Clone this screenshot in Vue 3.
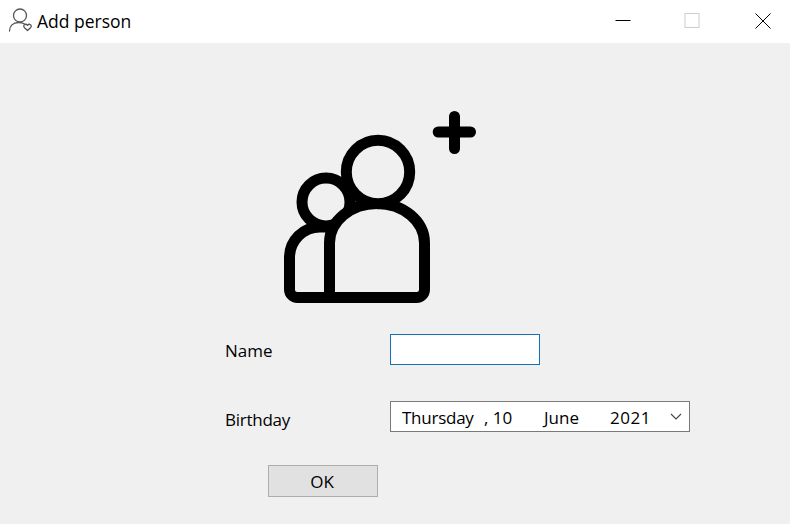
<template>
  <div class="window">
    <div class="titlebar">
      <svg class="app-icon" width="29" height="29" viewBox="0 0 29 29" fill="none" stroke="#555" stroke-width="1.300">
        <circle cx="16" cy="8.500" r="6.500" />
        <path d="M5.500 24c0-5 3.500-8.500 9-8.500 2.500 0 4.500.5 6 1.500" stroke-linecap="round" />
        <path d="M23.500 23.500l-3-2.800c-1-1-1-2.400 0-3 .9-.6 2.200-.4 3 .6.8-1 2.100-1.200 3-.6 1 .6 1 2 0 3z" stroke-linejoin="round" />
      </svg>
      <span class="title">Add person</span>
      <div class="controls">
        <svg width="16" height="16" viewBox="0 0 16 16"><path d="M0.500 7.500h15" stroke="#000" stroke-width="1" /></svg>
        <svg width="16" height="16" viewBox="0 0 16 16"><rect x="1" y="0.500" width="14" height="14" fill="none" stroke="#ccc" stroke-width="1" /></svg>
        <svg class="close" width="16" height="16" viewBox="0 0 16 16"><path d="M0.500 0.500l15 15M15.500 0.500l-15 15" stroke="#000" stroke-width="1" /></svg>
      </div>
    </div>

    <div class="content">
      <svg class="hero" width="200" height="200" viewBox="280 108 200 200" fill="none" stroke="#000" stroke-width="11">
        <circle cx="326" cy="202" r="24" />
        <path d="M332 227h-12a30.500 30.500 0 0 0-30.500 30.500V289.500a8 8 0 0 0 8 8h119a8 8 0 0 0 8-8v-46.500a47.500 39.500 0 0 0-47.500-39.500a47.500 39.500 0 0 0-47.500 39.500v54.500" fill="#f0f0f0" stroke-linejoin="round" />
        <circle cx="378" cy="172" r="31.700" fill="#f0f0f0" />
        <path d="M438.200 132h32.300M454.500 116.500v32" stroke-linecap="round" />
      </svg>

      <div class="row name-row">
        <label class="label name-label">Name</label>
        <input class="name-input" type="text" />
      </div>

      <div class="row birthday-row">
        <label class="label birthday-label">Birthday</label>
        <div class="date-picker">
          <span class="seg-day">Thursday</span>
          <span class="seg-num">, 10</span>
          <span class="seg-month">June</span>
          <span class="seg-year">2021</span>
          <svg class="chevron" width="12" height="8" viewBox="0 0 12 8" fill="none"><path d="M1 1l5 5 5-5" stroke="#444" stroke-width="1.100" /></svg>
        </div>
      </div>

      <button class="ok" type="button">OK</button>
    </div>
  </div>
</template>

<script setup>
</script>

<style>
html, body {
  margin: 0;
  background: #f0f0f0;
}
</style>

<style scoped>
.window {
  width: 790px;
  height: 524px;
  display: flex;
  flex-direction: column;
  overflow: hidden;
  font-family: "Open Sans", "Noto Sans", "Liberation Sans", sans-serif;
  font-size: 17px;
  color: #000;
}
.titlebar {
  height: 43px;
  background: #fff;
  display: flex;
  align-items: center;
  flex-shrink: 0;
}
.app-icon {
  margin-left: 4px;
  flex-shrink: 0;
}
.title {
  margin-left: 4px;
  margin-top: -2px;
  font-size: 17.500px;
}
.controls {
  margin-left: auto;
  display: flex;
  align-items: center;
  gap: 53px;
  padding-right: 19px;
  margin-top: -1px;
}
.close {
  margin-left: 2px;
}
.content {
  flex: 1;
  background: #f0f0f0;
  display: flex;
  flex-direction: column;
  align-items: flex-start;
  padding: 65px 0 0 225px;
}
.hero {
  margin-left: 55px;
  display: block;
}
.row {
  display: flex;
  align-items: center;
}
.name-row {
  margin-top: 26px;
}
.birthday-row {
  margin-top: 36px;
}
.label {
  width: 165px;
}
.name-label {
  padding-top: 2px;
}
.birthday-label {
  padding-top: 6px;
  letter-spacing: -0.250px;
}
.name-input {
  box-sizing: border-box;
  width: 150px;
  height: 31px;
  border: 1px solid #1272b5;
  background: #fff;
  padding: 0;
  outline: none;
}
.date-picker {
  box-sizing: border-box;
  width: 300px;
  height: 31px;
  border: 1px solid #7a7a7a;
  background: #fff;
  display: flex;
  align-items: center;
  padding: 1px 0 0 11px;
}
.seg-day {
  width: 82px;
  letter-spacing: -0.250px;
}
.seg-num {
  width: 60px;
}
.seg-month {
  width: 66px;
}
.seg-year {
  letter-spacing: 0.500px;
}
.chevron {
  margin-left: auto;
  margin-right: 7px;
}
.ok {
  box-sizing: border-box;
  margin: 33px 0 0 43px;
  width: 110px;
  height: 32px;
  background: #e1e1e1;
  border: 1px solid #adadad;
  font: inherit;
  color: #000;
  padding: 0 2px 0 0;
}
</style>
